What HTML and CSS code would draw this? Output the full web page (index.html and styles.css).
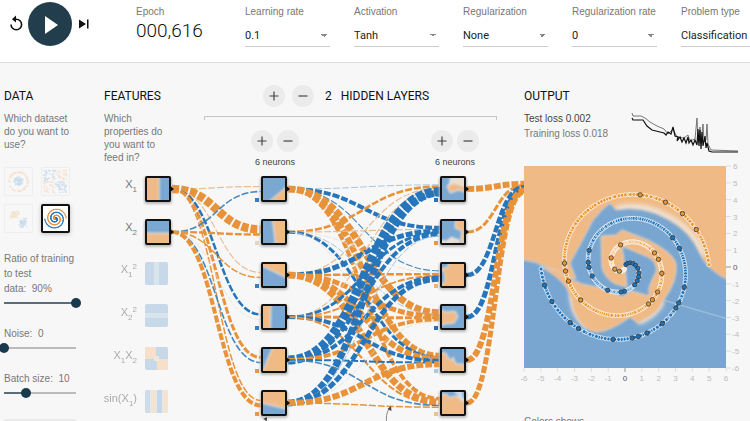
FILE: index.html
```html
<!DOCTYPE html>
<html lang="en">
<head>
    <meta charset="UTF-8">
    <meta name="viewport" content="width=device-width, initial-scale=1.0">
    <title>Neural Network Playground</title>
    <link rel="stylesheet" href="styles.css">
</head>
<body>
    <header class="top-controls">
        <div class="playback">
            <button class="icon-button" aria-label="Reset">
                <svg width="16" height="18" viewBox="0 0 16 18"><path d="M3 9.5a5.3 5.3 0 1 0 5.3-5.3H6" fill="none" stroke="#111" stroke-width="1.6"/><path d="M8 .6v7L4 4.2z" fill="#111"/></svg>
            </button>
            <button class="play-button" aria-label="Run">
                <svg width="44" height="44" viewBox="0 0 44 44"><path d="M17 14v18l13-9z" fill="#fff"/></svg>
            </button>
            <button class="icon-button" aria-label="Step">
                <svg width="12" height="12" viewBox="0 0 12 12"><path d="M1 1.500v9l7-4.500zM9 1.500h1.500v9H9z" fill="#111"/></svg>
            </button>
        </div>
        <div class="epoch">
            <span class="control-label">Epoch</span>
            <output class="epoch-value">000,616</output>
        </div>
        <div class="control">
            <label class="control-label" for="learningRate">Learning rate</label>
            <select id="learningRate"><option>0.1</option></select>
        </div>
        <div class="control">
            <label class="control-label" for="activation">Activation</label>
            <select id="activation"><option>Tanh</option></select>
        </div>
        <div class="control">
            <label class="control-label" for="regularization">Regularization</label>
            <select id="regularization"><option>None</option></select>
        </div>
        <div class="control">
            <label class="control-label" for="regularRate">Regularization rate</label>
            <select id="regularRate"><option>0</option></select>
        </div>
        <div class="control">
            <label class="control-label" for="problem">Problem type</label>
            <select id="problem"><option>Classification</option></select>
        </div>
    </header>

    <main class="main-part">
        <section class="data-column">
            <h2>Data</h2>
            <p class="question">Which dataset do you want to use?</p>
            <div class="datasets">
                <button class="dataset" aria-label="Circle"><svg id="data-circle" viewBox="0 0 29 29"></svg></button>
                <button class="dataset" aria-label="Exclusive or"><svg id="data-xor" viewBox="0 0 29 29"></svg></button>
                <button class="dataset" aria-label="Gaussian"><svg id="data-gauss" viewBox="0 0 29 29"></svg></button>
                <button class="dataset selected" aria-label="Spiral"><svg id="data-spiral" viewBox="0 0 29 29"></svg></button>
            </div>
            <div class="slider">
                <label for="ratio">Ratio of training<br>to test<br>data:&nbsp; 90%</label>
                <input type="range" id="ratio" min="10" max="90" value="90" style="--fill: 100%">
            </div>
            <div class="slider">
                <label for="noise">Noise:&nbsp; 0</label>
                <input type="range" id="noise" min="0" max="50" value="0" style="--fill: 0%">
            </div>
            <div class="slider">
                <label for="batch">Batch size:&nbsp; 10</label>
                <input type="range" id="batch" min="1" max="30" value="10" style="--fill: 31%">
            </div>
            <button class="regenerate">Regenerate</button>
        </section>

        <section class="network-column">
            <div class="network-head">
                <div class="features">
                    <h2>Features</h2>
                    <p class="question">Which properties do you want to feed in?</p>
                </div>
                <div class="hidden-layers">
                    <div class="layers-title">
                        <button class="round-button" aria-label="Add layer"><svg viewBox="0 0 22 22"><path d="M11 6.500v9M6.500 11h9"/></svg></button>
                        <button class="round-button" aria-label="Remove layer"><svg viewBox="0 0 22 22"><path d="M6.500 11h9"/></svg></button>
                        <span class="layer-count">2</span>
                        <h2>Hidden layers</h2>
                    </div>
                    <div class="bracket"></div>
                    <div class="neuron-controls">
                        <div class="neuron-group">
                            <div class="button-pair">
                                <button class="round-button" aria-label="Add neuron"><svg viewBox="0 0 22 22"><path d="M11 6.500v9M6.500 11h9"/></svg></button>
                                <button class="round-button" aria-label="Remove neuron"><svg viewBox="0 0 22 22"><path d="M6.500 11h9"/></svg></button>
                            </div>
                            <span>6 neurons</span>
                        </div>
                        <div class="neuron-group">
                            <div class="button-pair">
                                <button class="round-button" aria-label="Add neuron"><svg viewBox="0 0 22 22"><path d="M11 6.500v9M6.500 11h9"/></svg></button>
                                <button class="round-button" aria-label="Remove neuron"><svg viewBox="0 0 22 22"><path d="M6.500 11h9"/></svg></button>
                            </div>
                            <span>6 neurons</span>
                        </div>
                    </div>
                </div>
            </div>
            <svg id="network" class="network" viewBox="104 168 420 256">
                <defs>
                    <filter id="soft"><feGaussianBlur stdDeviation="1"/></filter>
                    <clipPath id="box"><rect width="26" height="26" rx="2"/></clipPath>
                    <clipPath id="smallBox"><rect width="23" height="23" rx="2"/></clipPath>
                </defs>
                <g id="links"></g>
                <g id="nodes"></g>
                <g class="feature-names">
                    <text x="137" y="188">X<tspan class="sub" dy="4">1</tspan></text>
                    <text x="137" y="231">X<tspan class="sub" dy="4">2</tspan></text>
                    <text class="off" x="137" y="273">X<tspan class="sub" dy="4">1</tspan><tspan class="sub" dy="-8">2</tspan></text>
                    <text class="off" x="137" y="316">X<tspan class="sub" dy="4">2</tspan><tspan class="sub" dy="-8">2</tspan></text>
                    <text class="off" x="137" y="359">X<tspan class="sub" dy="4">1</tspan><tspan dy="-4">X</tspan><tspan class="sub" dy="4">2</tspan></text>
                    <text class="off" x="137" y="402">sin(X<tspan class="sub" dy="4">1</tspan><tspan dy="-4">)</tspan></text>
                </g>
                <g class="callout">
                    <path d="M387 424Q385 415 389 409"/><path class="head" d="M391 406l.5 5-4-2z"/>
                    <path d="M264 424l2-4"/><path class="head" d="M267 417v4l-4-2z"/>
                </g>
            </svg>
        </section>

        <section class="output-column">
            <h2>Output</h2>
            <div class="metrics">
                <div class="losses">
                    <div class="test-loss">Test loss 0.002</div>
                    <div>Training loss 0.018</div>
                </div>
                <svg class="loss-chart" viewBox="631 111 109 49">
                    <path class="training" d="M632 113L633 116L641 116L645 118L650 122L657 126L664 129L668 134L673 129L677 137L684 138L688 135L690 141L695 139L697 118L698 142L700 127L701 143L703 124L704 142L706 140L707 124L708 144L711 150L738 151"/>
                    <path d="M632 118L633 120L643 120L647 126L652 130L660 132L664 133L666 135L668 132L671 134L673 127L675 136L678 137L677 141L680 137L682 142L684 138L686 143L688 137L689 143L691 140L693 145L695 140L697 145L698 129L699 146L700 130L701 149L702 132L703 146L705 136L706 148L707 143L709 151L712 152L738 152"/>
                </svg>
            </div>
            <svg id="heatmap" class="heatmap" viewBox="524 160 226 225">
                <defs>
                    <filter id="edge" x="-10%" y="-10%" width="120%" height="120%"><feGaussianBlur stdDeviation="1.200"/></filter>
                    <filter id="haze" x="-20%" y="-20%" width="140%" height="140%"><feGaussianBlur stdDeviation="2"/></filter>
                    <clipPath id="mapArea"><rect x="524" y="166" width="202" height="202"/></clipPath>
                </defs>
                <g clip-path="url(#mapArea)">
                    <rect x="524" y="166" width="202" height="202" fill="#f0ba86"/>
                    <path class="glow" d="M616 209Q642 203 666 216Q694 229 703 256"/>
                    <path class="blue-area" d="M515 258L524 260Q547 263 563 279L576 279L570 263L581 243L593 220L603 209L610 203L616 210Q642 205 667 219Q690 231 700 254Q708 272 735 283V380H515Z"/>
                    <path class="ridge" d="M663 300L728 319"/>
                    <path class="glow" d="M572 293Q573 315 588 327M662 301Q656 315 638 322"/>
                    <path class="orange-area" d="M540 266Q558 276 566 287Q572 297 573 309Q582 331 597 332Q611 331 630 317L638 323Q659 314 663 301Q678 281 676 264Q674 253 648 240L622 230L616 235L601 236L602 268Q606 280 616 284L627 287L625 268L622 246L648 257Q658 263 656 272Q651 281 649 288L649 296L632 291L622 297L606 289L582 284L568 278L556 270Z"/>
                </g>
                <g id="axes" class="axes"></g>
                <g id="points"></g>
            </svg>
            <p class="legend">Colors shows</p>
        </section>
    </main>
    <script src="script.js"></script>
</body>
</html>
```

FILE: styles.css
```css
* {
    box-sizing: border-box;
}

body {
    margin: 0;
    height: 100vh;
    overflow: hidden;
    background-color: #f7f7f7;
    color: #777;
    font-family: "Liberation Sans", Arial, sans-serif;
    font-size: 10px;
}

button {
    padding: 0;
    border: none;
    background: none;
    cursor: pointer;
}

svg {
    display: block;
}

h2 {
    margin: 0;
    font-family: Roboto, sans-serif;
    font-size: 12px;
    font-weight: 400;
    line-height: 16px;
    color: #111;
    text-transform: uppercase;
}

/* Top bar */
.top-controls {
    display: flex;
    gap: 24px;
    height: 63px;
    padding-left: 8px;
    overflow: hidden;
    background-color: #fff;
    box-shadow: inset 0 -1px 0 #ddd;
}

.playback {
    display: flex;
    align-items: center;
    gap: 6px;
    flex: 0 0 104px;
    height: 47px;
}

.icon-button {
    flex: none;
}

.play-button {
    flex: none;
    width: 44px;
    height: 44px;
    margin-left: -2px;
    border-radius: 50%;
    background-color: #223d4c;
}

.epoch,
.control {
    display: flex;
    flex-direction: column;
    flex: none;
    width: 85px;
    padding-top: 5px;
}

.control-label {
    line-height: 13px;
    white-space: nowrap;
    color: #777;
}

.epoch-value {
    font-family: Roboto, sans-serif;
    font-size: 19px;
    font-weight: 300;
    line-height: 26px;
    color: #111;
}

.control select {
    appearance: none;
    height: 23px;
    margin-top: 6px;
    padding: 0;
    border: none;
    border-bottom: 1px solid #ccc;
    border-radius: 0;
    background: linear-gradient(to bottom right, #888 50%, transparent 50%) 79px 10px / 3px 3px no-repeat,
        linear-gradient(to bottom left, #888 50%, transparent 50%) 76px 10px / 3px 3px no-repeat;
    font-family: Roboto, sans-serif;
    font-size: 11px;
    color: #222;
}

/* Columns */
.main-part {
    display: grid;
    grid-template-columns: 72px 1fr 226px;
    padding: 22px 0 0 4px;
}

.data-column,
.output-column {
    padding-top: 3px;
}

.question {
    margin: 8px 0 0;
    line-height: 13px;
}

.datasets {
    display: flex;
    flex-wrap: wrap;
    gap: 8px;
    margin: 16px 0 18px;
}

.dataset {
    width: 29px;
    height: 29px;
    border: 1px solid #eee;
    border-radius: 2px;
}

.dataset svg {
    width: 100%;
    opacity: .2;
}

.dataset.selected {
    border: 2px solid #111;
    background-color: #fff;
    box-shadow: 0 1px 4px #bbb;
}

.dataset.selected svg {
    opacity: 1;
}

.slider {
    display: flex;
    flex-direction: column;
    gap: 1px;
    margin-bottom: 17px;
}

.slider label {
    line-height: 15px;
}

.slider input {
    appearance: none;
    width: calc(100% + 10px);
    height: 12px;
    margin: 0 -5px;
    background: none;
}

.slider input::-webkit-slider-runnable-track {
    height: 12px;
    background: linear-gradient(to right, #5b6d78 var(--fill), #bbb var(--fill)) center / calc(100% - 10px) 2px no-repeat;
}

.slider input::-webkit-slider-thumb {
    appearance: none;
    width: 10px;
    height: 10px;
    margin-top: 1px;
    border-radius: 50%;
    background-color: #193a4c;
}

.regenerate {
    width: 100%;
    height: 34px;
    margin-top: 3px;
    background-color: #eaeaea;
    color: #777;
}

/* Network */
.network-column {
    padding-left: 28px;
}

.network-head {
    display: grid;
    grid-template-columns: 100px 1fr;
    height: 83px;
}

.features {
    padding: 3px 32px 0 0;
}

.layers-title {
    display: flex;
    align-items: center;
    gap: 7px;
    padding-left: 59px;
}

.layer-count {
    margin: 0 2px 0 4px;
    font-family: Roboto, sans-serif;
    font-size: 12px;
    color: #111;
}

.round-button {
    width: 22px;
    height: 22px;
    border-radius: 50%;
    background-color: #ebebeb;
}

.round-button path {
    stroke: #444;
    stroke-width: 1.2;
}

.bracket {
    height: 4px;
    margin: 9px 27px 0 0;
    border: 1px solid #c4c4c4;
    border-bottom: none;
}

.neuron-controls {
    display: flex;
    justify-content: space-between;
    margin: 10px 45px 0 47px;
}

.neuron-group {
    display: flex;
    flex-direction: column;
    align-items: center;
    gap: 4px;
    line-height: 12px;
    font-size: 9px;
    color: #444;
}

.button-pair {
    display: flex;
    gap: 4px;
}

.network {
    width: 100%;
}

.link {
    fill: none;
    stroke-dasharray: 7 2;
}

.node-frame {
    fill: none;
    stroke: #111;
    stroke-width: 2;
}

.feature-names {
    font-size: 11px;
    fill: #777;
    text-anchor: end;
}

.feature-names .off {
    opacity: .6;
}

.feature-names .sub {
    font-size: 8px;
}

.callout path {
    fill: none;
    stroke: #888;
}

.callout .head {
    fill: #444;
    stroke: none;
}

/* Output */
.metrics {
    display: flex;
    margin-top: 7px;
}

.losses {
    width: 107px;
    line-height: 15px;
}

.test-loss {
    color: #444;
}

.loss-chart {
    width: 109px;
    height: 49px;
    fill: none;
    stroke: #111;
    stroke-width: 1.2;
}

.loss-chart .training {
    stroke: #555;
    stroke-width: .8;
}

.heatmap {
    width: 100%;
    overflow: visible;
}

.blue-area {
    fill: #79a6d0;
    stroke: #c9d1d8;
    stroke-width: 1;
    filter: url(#edge);
}

.orange-area {
    fill: #f0ba86;
    stroke: #dfd5cb;
    stroke-width: 1;
    filter: url(#edge);
}

.glow {
    fill: none;
    stroke: #eee3d8;
    stroke-width: 6;
    filter: url(#haze);
}

.ridge {
    stroke: #9bbcd9;
    stroke-width: 1.5;
}

.axes {
    font-size: 8px;
    fill: #bbb;
    stroke-width: 1;
}

.axes .zero {
    fill: #555;
}

.legend {
    margin: 30px 0 0;
    line-height: 13px;
}
```

FILE: script.js
```javascript
const SVG_NS = 'http://www.w3.org/2000/svg';
const ORANGE = '#f0ba86';
const BLUE = '#7aa8d3';

function add(parent, tag, attrs, text) {
    const el = document.createElementNS(SVG_NS, tag);
    for (const key in attrs) {
        el.setAttribute(key, attrs[key]);
    }
    if (text !== undefined) {
        el.textContent = text;
    }
    parent.appendChild(el);
    return el;
}

// small repeatable random generator
let seed = 7;
function random() {
    seed = (seed * 16807) % 2147483647;
    return seed / 2147483647;
}

const rowY = [176, 219, 262, 304, 347, 390];
const links = document.getElementById('links');
const nodes = document.getElementById('nodes');

// weight: sign picks the color, size is the stroke width
function linkColor(weight) {
    const size = Math.abs(weight);
    if (weight > 0) {
        return size < 1.1 ? '#a9c6dd' : size < 2 ? '#4389bd' : '#2776bb';
    }
    return size < .8 ? '#e8dccf' : size < 1.3 ? '#e8bd90' : '#e8923a';
}

function drawLink(x1, y1, x2, y2, weight) {
    const mid = (x1 + x2) / 2;
    add(links, 'path', {
        class: 'link',
        d: `M${x1} ${y1}C${mid} ${y1} ${mid} ${y2} ${x2} ${y2}`,
        stroke: linkColor(weight),
        'stroke-width': Math.abs(weight)
    });
}

function drawLayer(weights, x1, x2, targets) {
    weights.forEach((row, i) => {
        row.forEach((weight, j) => {
            const offset = (i - (weights.length - 1) / 2) / weights.length * 10;
            drawLink(x1, rowY[i] + 13, x2, targets[j] + 13 + offset, weight);
        });
    });
}

drawLayer([
    [-1.2, -8.5, -1.1, 2.5, -3, -1.5],
    [1.6, -2.4, -1.5, -.7, 1.6, -4]
], 172, 261, rowY);

drawLayer([
    [1, 4, 1.1, -7, -6, -4],
    [-2.6, -1.2, -.7, 1, 3, -.7],
    [-1.2, 5, -2.5, -5, -6, -7],
    [-1.1, 3, -2, -3, 4, -2],
    [9, 4, 4, -4, 2, 1.6],
    [7, 1, 5, -.7, -6, -1.5]
], 288, 440, rowY);

drawLayer([[-6], [-3], [4.5], [5], [-6], [-5]], 467, 524, [175]);

// each node: base color, then [color, points] patches
const blueX = [ORANGE, [BLUE, '14,-3 30,-3 30,30 14,30']];
const blueY = [BLUE, [ORANGE, '-3,14 30,14 30,30 -3,30']];
const firstLayer = [
    [BLUE, [ORANGE, '4,29 30,7 30,30']],
    [BLUE, [ORANGE, '11,-3 30,-3 30,30 15,30']],
    [BLUE, [ORANGE, '-3,2 -3,-3 30,-3 30,18']],
    [ORANGE, [BLUE, '10,-3 30,-3 30,30 9,30']],
    [ORANGE, [BLUE, '-3,-3 13,-3 1,26 -3,30']],
    [ORANGE, [BLUE, '-3,12 30,20 30,30 -3,30']]
];
const secondLayer = [
    [BLUE, ['#e9ded2', '11,-3 30,-3 30,15 20,12 9,11'], [ORANGE, '7,10 14,7 26,11 30,18 19,14 10,17']],
    [BLUE, [ORANGE, '16,-3 30,-3 30,22 20,24 22,12 15,9'], ['#e9ded2', '-3,21 7,22 11,18 19,21 18,30 -3,30'], [ORANGE, '12,23 18,22 18,25 12,26']],
    [ORANGE, [BLUE, '-3,-3 11,-3 8,5 1,7 5,12 5,19 1,24 -3,24']],
    [BLUE, [ORANGE, '-3,5 7,8 15,7 18,13 14,19 5,20 -3,23']],
    [BLUE, [ORANGE, '-3,6 6,6 9,12 12,13 13,10 16,17 22,17 30,20 30,30 -3,30']],
    [ORANGE, [BLUE, '-3,-3 30,-3 30,16 24,12 21,7 14,6 10,8 6,4 -3,5'], ['#c9d9e6', '14,1 22,1 22,7 26,11 21,10 18,5']]
];

function drawNode(x, y, shape) {
    const g = add(nodes, 'g', { transform: `translate(${x} ${y})` });
    add(g, 'rect', { x: -1, y: 1, width: 28, height: 27, rx: 3, fill: '#bbb', filter: 'url(#soft)' });
    const area = add(g, 'g', { 'clip-path': 'url(#box)' });
    add(area, 'rect', { width: 26, height: 26, fill: shape[0] });
    shape.slice(1).forEach(([color, points]) => {
        add(area, 'polygon', { points, fill: color, stroke: '#e8eaeb', filter: 'url(#soft)' });
    });
    add(g, 'rect', { class: 'node-frame', x: 1, y: 1, width: 24, height: 24, rx: 1 });
    add(g, 'path', { d: 'M26 10.5l3 2.500-3 2.500z', fill: '#111' });
}

drawNode(145, rowY[0], blueX);
drawNode(145, rowY[1], blueY);
firstLayer.forEach((shape, i) => drawNode(261, rowY[i], shape));
secondLayer.forEach((shape, i) => drawNode(440, rowY[i], shape));

// features that are switched off
const inactive = [
    ['#c7d9e9', ['#d9e5ec', 9, 0, 5, 23]],
    ['#c7d9e9', ['#d9e5ec', 0, 9, 23, 5]],
    ['#c7d9e9', ['#f8dfca', 0, 0, 11, 12], ['#f8dfca', 12, 12, 11, 11], ['#eee7df', 9, 9, 5, 5]],
    ['#e6e8e8', ['#cbdcea', 0, 0, 5, 23], ['#f5e3d2', 6, 0, 5, 23], ['#c3d8ea', 12, 0, 5, 23], ['#f5e3d2', 18, 0, 5, 23]]
];
inactive.forEach((shape, i) => {
    const g = add(nodes, 'g', { transform: `translate(145 ${rowY[i + 2]})`, 'clip-path': 'url(#smallBox)' });
    add(g, 'rect', { width: 23, height: 23, fill: shape[0] });
    shape.slice(1).forEach(([fill, x, y, width, height]) => add(g, 'rect', { x, y, width, height, fill }));
});

function drawBiases(x, colors) {
    colors.forEach((fill, i) => add(nodes, 'rect', { x, y: rowY[i] + 22, width: 4, height: 4, fill }));
}
drawBiases(255, ['#3a7dbb', '#e5d5c0', '#3a7dbb', '#3a7dbb', '#e8963f', '#e8963f']);
drawBiases(434, ['#2776bb', '#e8963f', '#e9b37a', '#2a6db0', '#a9cbe0', '#ecc08f']);

// axes of the heatmap
const axes = document.getElementById('axes');
const scale = 202 / 12;
for (let v = -6; v <= 6; v++) {
    const x = 625 + v * scale;
    const y = 267 - v * scale;
    const zero = v === 0 ? 'zero' : '';
    add(axes, 'path', { d: `M${x} 368v4M726 ${y}h5`, stroke: v === 0 ? '#999' : '#ddd' });
    add(axes, 'text', { class: zero, x, y: 381, 'text-anchor': 'middle' }, v);
    add(axes, 'text', { class: zero, x: v < 0 ? 732 : 733, y: y + 3 }, v);
}

// spiral samples
const SAMPLES = 250;
const testOrange = [21, 31, 49, 67, 97, 102, 111, 122, 127, 130, 164, 173, 177, 180, 219, 227, 233, 239];
const testBlue = [8, 14, 20, 26, 32, 38, 45, 50, 55, 60, 72, 75, 86, 101, 107, 110, 117, 166, 171, 186, 192, 194, 201, 207, 210, 212, 218, 229, 232, 240, 245];

function spiralPoint(i, shift) {
    const r = i / SAMPLES * 5;
    const t = 1.75 * i / SAMPLES * 2 * Math.PI + shift;
    return [r * Math.sin(t), r * Math.cos(t)];
}

function drawSpiral(shift, color, tests) {
    const points = document.getElementById('points');
    const place = i => {
        const [x, y] = spiralPoint(i, shift);
        return { cx: 625 + x * scale, cy: 267 - y * scale };
    };
    for (let i = 6; i < SAMPLES; i++) {
        add(points, 'circle', { ...place(i + random() * .6), r: 2, fill: color, stroke: '#fff', 'stroke-opacity': .75 });
    }
    tests.forEach(i => {
        add(points, 'circle', { ...place(i), r: 2.2, fill: color, stroke: '#333', 'stroke-opacity': .8 });
    });
}
drawSpiral(Math.PI, '#ea962f', testOrange);
drawSpiral(0, '#1d74bd', testBlue);

// dataset thumbnails
function dot(id, x, y, fill, r = .8) {
    add(document.getElementById(id), 'circle', { cx: x, cy: y, r, fill });
}
for (let i = 0; i < 90; i++) {
    const a = random() * 2 * Math.PI;
    const inner = random() * 5;
    const outer = 9 + random() * 2;
    dot('data-circle', 14.5 + inner * Math.sin(a), 14.5 + inner * Math.cos(a), '#2776bb');
    dot('data-circle', 14.5 + outer * Math.sin(a), 14.5 + outer * Math.cos(a), '#e8923a');
}
for (let i = 0; i < 180; i++) {
    const x = 2 + random() * 25;
    const y = 2 + random() * 25;
    dot('data-xor', x, y, (x - 14.5) * (y - 14.5) < 0 ? '#e8923a' : '#2776bb');
}
for (let i = 0; i < 70; i++) {
    const dx = (random() + random() - 1) * 5;
    const dy = (random() + random() - 1) * 5;
    dot('data-gauss', 10 + dx, 10 + dy, '#e8923a');
    dot('data-gauss', 19 + dy, 19 + dx, '#2776bb');
}
for (let i = 4; i < SAMPLES; i++) {
    const [x, y] = spiralPoint(i, 0);
    dot('data-spiral', 14.5 + x * 2.5, 14.5 - y * 2.5, '#2776bb', .6);
    dot('data-spiral', 14.5 - x * 2.5, 14.5 + y * 2.5, '#e8923a', .6);
}
```
